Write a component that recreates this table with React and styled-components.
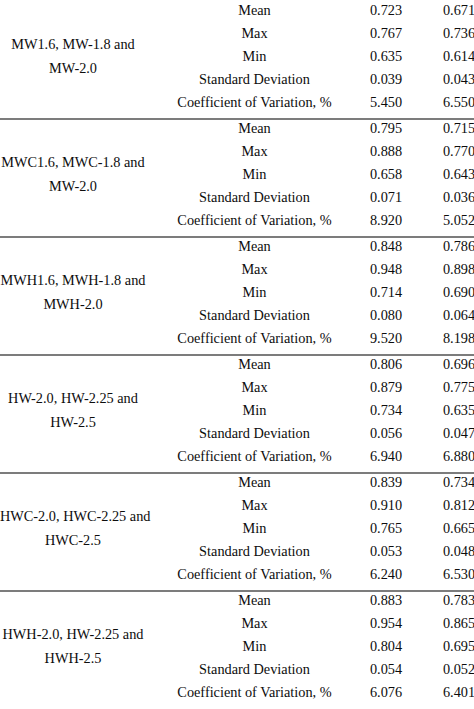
import React from 'react';
import styled, { createGlobalStyle } from 'styled-components';

// statistics table: one block per specimen series, five stat rows each

const GlobalStyle = createGlobalStyle`
  html, body {
    margin: 0;
    padding: 0;
    background: #ffffff;
    overflow: hidden;
  }
`;

const Page = styled.div`
  width: 474px;
  height: 709px;
  overflow: hidden;
  padding-top: 2px;
  box-sizing: border-box;
  font-family: "Liberation Serif", "Times New Roman", serif;
  font-size: 14.3px;
  color: #0d0d0d;
`;

const Group = styled.div`
  display: grid;
  width: 509px;
  grid-template-columns: 146px 217px 46px 100px;
  grid-template-rows: repeat(5, 23px);
  padding-bottom: 1px;
  border-bottom: 2px solid #7c7c7c;

  &:last-child {
    border-bottom: none;
  }
`;

const Label = styled.div`
  grid-column: 1;
  grid-row: 1 / span 5;
  align-self: center;
  text-align: center;
  line-height: 24px;
  padding-bottom: 7px;
  white-space: nowrap;
`;

const Cell = styled.div`
  grid-column: ${(p) => p.col};
  line-height: 16px;
  text-align: center;
  white-space: nowrap;
`;

const STATS = ['Mean', 'Max', 'Min', 'Standard Deviation', 'Coefficient of Variation, %'];

const groups = [
  { label: ['MW1.6, MW-1.8 and', 'MW-2.0'], values: [['0.723', '0.671'], ['0.767', '0.736'], ['0.635', '0.614'], ['0.039', '0.043'], ['5.450', '6.550']] },
  { label: ['MWC1.6, MWC-1.8 and', 'MW-2.0'], values: [['0.795', '0.715'], ['0.888', '0.770'], ['0.658', '0.643'], ['0.071', '0.036'], ['8.920', '5.052']] },
  { label: ['MWH1.6, MWH-1.8 and', 'MWH-2.0'], values: [['0.848', '0.786'], ['0.948', '0.898'], ['0.714', '0.690'], ['0.080', '0.064'], ['9.520', '8.198']] },
  { label: ['HW-2.0, HW-2.25 and', 'HW-2.5'], values: [['0.806', '0.696'], ['0.879', '0.775'], ['0.734', '0.635'], ['0.056', '0.047'], ['6.940', '6.880']] },
  { label: ['HWC-2.0, HWC-2.25 and', 'HWC-2.5'], values: [['0.839', '0.734'], ['0.910', '0.812'], ['0.765', '0.665'], ['0.053', '0.048'], ['6.240', '6.530']] },
  { label: ['HWH-2.0, HW-2.25 and', 'HWH-2.5'], values: [['0.883', '0.783'], ['0.954', '0.865'], ['0.804', '0.695'], ['0.054', '0.052'], ['6.076', '6.401']] },
];

const App = () => {
  return (
    <Page>
      <GlobalStyle />
      {groups.map((group, gi) => (
        <Group key={gi}>
          <Label>
            {group.label[0]}
            <br />
            {group.label[1]}
          </Label>
          {STATS.map((stat, i) => (
            <React.Fragment key={stat}>
              <Cell col={2}>{stat}</Cell>
              <Cell col={3}>{group.values[i][0]}</Cell>
              <Cell col={4}>{group.values[i][1]}</Cell>
            </React.Fragment>
          ))}
        </Group>
      ))}
    </Page>
  );
};

export default App;
